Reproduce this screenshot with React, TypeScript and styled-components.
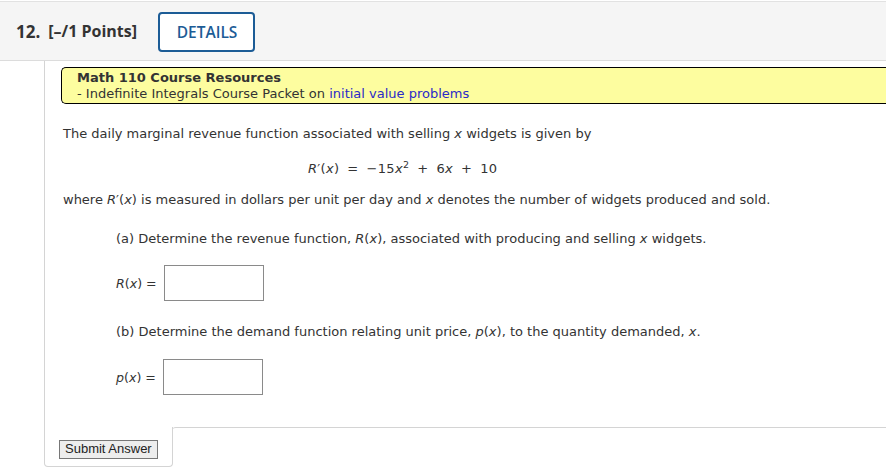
import React from "react";
import styled, { createGlobalStyle } from "styled-components";

const GlobalStyle = createGlobalStyle`
  html, body {
    margin: 0;
    padding: 0;
    background: #fff;
  }
  body {
    font-family: "DejaVu Sans", Verdana, sans-serif;
    color: #333;
    overflow: hidden;
  }
`;

const Page = styled.div`
  width: 886px;
  height: 473px;
  overflow: hidden;
`;

const Header = styled.div`
  display: flex;
  align-items: center;
  margin-top: 1px;
  height: 58px;
  background: #f5f5f5;
  border-top: 1px solid #e2e2e2;
  border-bottom: 1px solid #dcdcdc;
  padding-left: 16px;
  font-family: "Open Sans", sans-serif;
  font-weight: 700;
  color: #333;
`;

const QNumber = styled.span`
  font-size: 17px;
  margin-right: 8px;
`;

const Points = styled.span`
  font-size: 16px;
  margin-right: 21px;
`;

const DetailsButton = styled.button`
  box-sizing: border-box;
  width: 97px;
  height: 40px;
  margin-top: 1px;
  background: #fff;
  border: 2px solid #1c5c96;
  border-radius: 4px;
  color: #1c5c96;
  font-family: "Open Sans", sans-serif;
  font-weight: 600;
  font-size: 15.5px;
  padding: 0 0 0 1px;
`;

const Panel = styled.div`
  margin-left: 44px;
  border-left: 1px solid #d4d4d4;
  height: 366px;
  padding: 6px 0 0 16px;
  box-sizing: border-box;
  font-size: 13px;
`;

const Resources = styled.div`
  background: #fdfd9f;
  border: 1px solid #000;
  border-right: none;
  border-radius: 5px 0 0 5px;
  padding: 2px 0 1px 15px;
  line-height: 16px;
  color: #333;
`;

const ResTitle = styled.div`
  font-weight: bold;
`;

const Link = styled.a`
  color: #2a2ac8;
  text-decoration: none;
`;

const Content = styled.div`
  padding-left: 2px;
`;

const Para = styled.p<{ $indent?: boolean; $top: number }>`
  margin: ${(p) => p.$top}px 0 0 ${(p) => (p.$indent ? 53 : 0)}px;
  line-height: 16px;
`;

const Equation = styled.p`
  margin: 19px 0 0 245px;
  line-height: 16px;
  letter-spacing: 0.3px;
`;

const Op = styled.span`
  margin: 0 8px;
`;

const Sup = styled.sup`
  font-size: 9.5px;
  line-height: 0;
`;

const AnswerRow = styled.div<{ $top: number }>`
  display: flex;
  align-items: center;
  gap: 7px;
  margin: ${(p) => p.$top}px 0 0 53px;
  font-size: 12.6px;
`;

const AnswerInput = styled.input`
  box-sizing: border-box;
  width: 100px;
  height: 36px;
  border: 1px solid #8a8a8a;
  margin: 0;
`;

const Footer = styled.div`
  display: flex;
  margin-left: 44px;
`;

const SubmitCell = styled.div`
  box-sizing: border-box;
  width: 129px;
  height: 40px;
  border: 1px solid #d4d4d4;
  border-top: none;
  border-radius: 0 0 4px 4px;
  padding: 11px 0 0 14px;
`;

const SubmitButton = styled.button`
  box-sizing: border-box;
  height: 19px;
  padding: 0 5px;
  background: #ededed;
  border: 1px solid #777;
  border-radius: 0;
  font-family: "Liberation Sans", Arial, sans-serif;
  font-size: 13px;
  color: #222;
  line-height: 16px;
`;

const Filler = styled.div`
  flex: 1;
  border-top: 1px solid #d4d4d4;
  border-top-left-radius: 4px;
  margin-left: -1px;
`;

const I = styled.i``;

export default function App() {
  return (
    <Page>
      <GlobalStyle />
      <Header>
        <QNumber>12.</QNumber>
        <Points>[–/1 Points]</Points>
        <DetailsButton>DETAILS</DetailsButton>
      </Header>
      <Panel>
        <Resources>
          <ResTitle>Math 110 Course Resources</ResTitle>
          <div>
            - Indefinite Integrals Course Packet on{" "}
            <Link href="#">initial value problems</Link>
          </div>
        </Resources>
        <Content>
          <Para $top={22}>
            The daily marginal revenue function associated with selling <I>x</I> widgets is given by
          </Para>
          <Equation>
            <I>R</I>′(<I>x</I>)<Op>=</Op>−15<I>x</I>
            <Sup>2</Sup>
            <Op>+</Op>6<I>x</I>
            <Op>+</Op>10
          </Equation>
          <Para $top={15}>
            where <I>R</I>′(<I>x</I>) is measured in dollars per unit per day and <I>x</I> denotes the
            number of widgets produced and sold.
          </Para>
          <Para $indent $top={23}>
            (a) Determine the revenue function, <I>R</I>(<I>x</I>), associated with producing and
            selling <I>x</I> widgets.
          </Para>
          <AnswerRow $top={18}>
            <span>
              <I>R</I>(<I>x</I>) =
            </span>
            <AnswerInput />
          </AnswerRow>
          <Para $indent $top={23}>
            (b) Determine the demand function relating unit price, <I>p</I>(<I>x</I>), to the quantity
            demanded, <I>x</I>.
          </Para>
          <AnswerRow $top={19}>
            <span>
              <I>p</I>(<I>x</I>) =
            </span>
            <AnswerInput />
          </AnswerRow>
        </Content>
      </Panel>
      <Footer>
        <SubmitCell>
          <SubmitButton>Submit Answer</SubmitButton>
        </SubmitCell>
        <Filler />
      </Footer>
    </Page>
  );
}
